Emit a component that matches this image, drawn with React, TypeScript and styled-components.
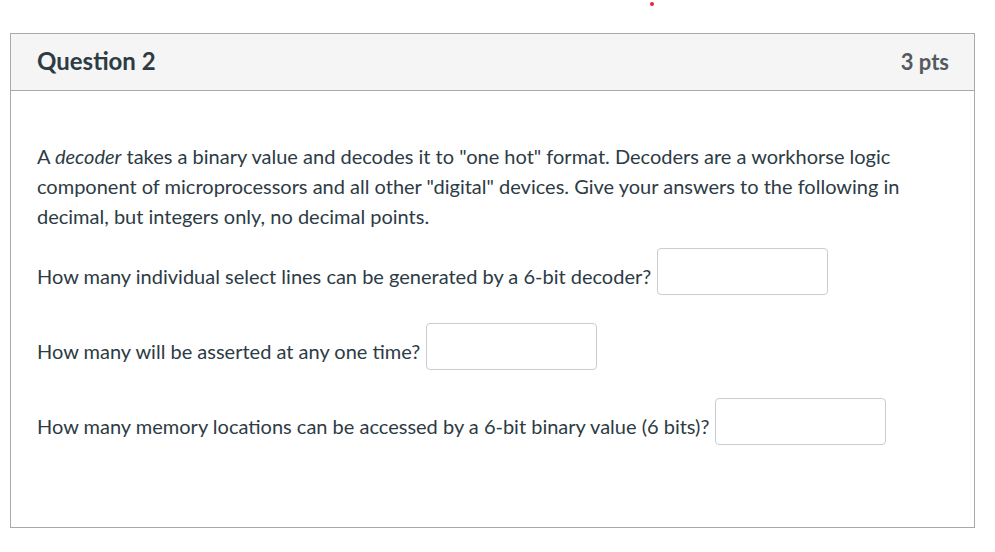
import React from 'react';
import styled, { createGlobalStyle } from 'styled-components';

const GlobalStyle = createGlobalStyle`
  html, body {
    margin: 0;
    padding: 0;
    background: #ffffff;
  }
  body {
    font-family: Lato, "Open Sans", "Liberation Sans", sans-serif;
    color: #2d3b45;
  }
`;

const Page = styled.div`
  position: relative;
  padding: 33px 20px 24px 10px;
`;

const Marker = styled.span`
  position: absolute;
  left: 650px;
  top: 2px;
  width: 4px;
  height: 4px;
  border-radius: 50%;
  background: #e8262b;
`;

const Card = styled.div`
  border: 1px solid #aaaaaa;
  background: #ffffff;
`;

const Header = styled.div`
  height: 56px;
  display: flex;
  align-items: center;
  justify-content: space-between;
  padding: 0 25px 0 26px;
  background: #f5f5f5;
  border-bottom: 1px solid #aaaaaa;
`;

const Title = styled.h2`
  margin: 0;
  padding-bottom: 4px;
  font-size: 24px;
  font-weight: 700;
  color: #2d3b45;
`;

const Points = styled.div`
  padding-bottom: 2px;
  font-size: 22px;
  font-weight: 700;
  color: #555a5e;
`;

const Body = styled.div`
  padding: 50px 26px 82px;
`;

const Text = styled.p`
  margin: 0 0 17px;
  font-size: 20px;
  line-height: 30px;
  color: #2d3b45;
`;

const QuestionRow = styled.div`
  display: flex;
  align-items: center;
  & + & {
    margin-top: 28px;
  }
`;

const Label = styled.span`
  font-size: 20px;
  line-height: 30px;
  padding-top: 8px;
  color: #2d3b45;
`;

const AnswerInput = styled.input`
  box-sizing: border-box;
  width: 171px;
  height: 47px;
  margin-left: 6px;
  border: 1px solid #c9cdd1;
  border-radius: 4px;
  background: #ffffff;
  font-family: inherit;
  font-size: 20px;
  padding: 0 10px;
  outline: none;
`;

const questions = [
  'How many individual select lines can be generated by a 6-bit decoder?',
  'How many will be asserted at any one time?',
  'How many memory locations can be accessed by a 6-bit binary value (6 bits)?',
];

const App: React.FC = () => {
  return (
    <>
      <GlobalStyle />
      <Page>
        <Marker />
        <Card>
          <Header>
            <Title>Question 2</Title>
            <Points>3 pts</Points>
          </Header>
          <Body>
            <Text>
              A <em>decoder</em> takes a binary value and decodes it to "one hot" format. Decoders are a workhorse logic
              component of microprocessors and all other "digital" devices. Give your answers to the following in
              decimal, but integers only, no decimal points.
            </Text>
            {questions.map(q => (
              <QuestionRow key={q}>
                <Label>{q}</Label>
                <AnswerInput type="text" aria-label={q} />
              </QuestionRow>
            ))}
          </Body>
        </Card>
      </Page>
    </>
  );
};

export default App;
